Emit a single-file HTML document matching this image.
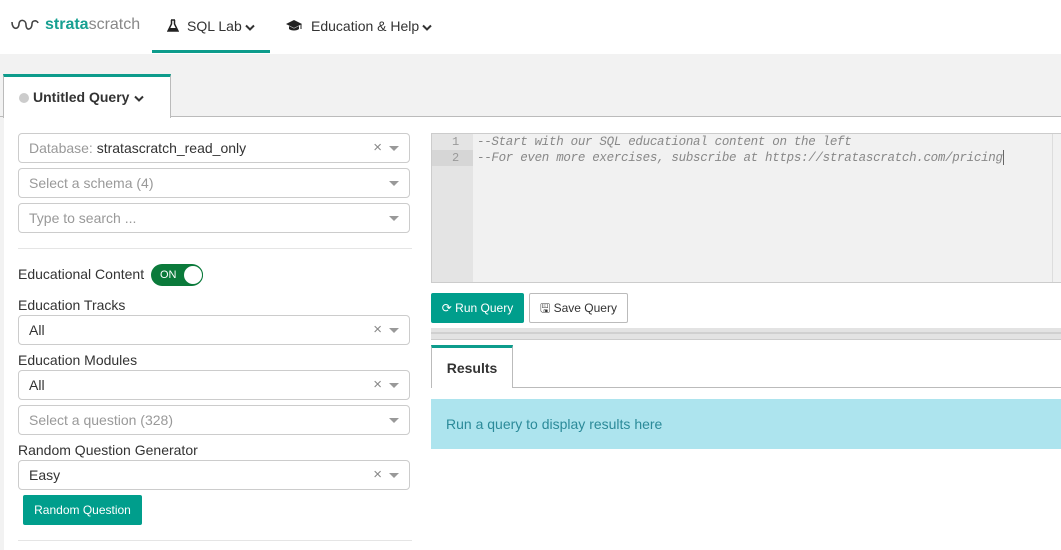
<!DOCTYPE html><html><head><style>
*{box-sizing:border-box;margin:0;padding:0}
body{width:1061px;height:550px;overflow:hidden;background:#fff;font-family:"Liberation Sans",sans-serif;position:relative;color:#333}
.a{position:absolute}
.sel{position:absolute;left:18px;width:392px;height:30px;border:1px solid #ccc;border-radius:4px;font-size:14px;line-height:28px;padding-left:10px;color:#333}
.ph{color:#999}
.sel .x{position:absolute;right:27px;top:0;color:#888;font-size:15px}
.sel .c{position:absolute;right:10px;top:12px;border-left:5px solid transparent;border-right:5px solid transparent;border-top:5px solid #999}
.lbl{position:absolute;left:18px;font-size:14px;color:#333}
.code{position:absolute;left:477px;font-family:"Liberation Mono",monospace;font-style:italic;font-size:12.5px;color:#888;letter-spacing:-0.3px}
.chev{display:inline-block;vertical-align:middle;margin-left:3px}
</style></head><body>
<svg class="a" style="left:10px;top:18px" width="30" height="14" viewBox="0 0 30 14"><path d="M2 4 C2 12,9 12,9 6 C9 1,16 1,16 7 C16 13,22 12,22 6 C22 2,27 2,28 5" fill="none" stroke="#444" stroke-width="1.6"/></svg>
<div class="a" style="left:45px;top:16px;font-size:16px;"><b style="color:#17a091">strata</b><span style="color:#888">scratch</span></div>
<svg class="a" style="left:167px;top:19px" width="12" height="13" viewBox="0 0 12 13"><path d="M4 1h4M4.5 1v4L1 12h10L7.5 5V1" fill="none" stroke="#222" stroke-width="1.5"/><path d="M2.5 9h7l1.5 3H1z" fill="#222"/></svg>
<div class="a" style="left:187px;top:18px;font-size:14px;color:#333">SQL Lab<svg class="chev" width="10" height="7" viewBox="0 0 10 7"><path d="M1 1.5l4 4 4-4" fill="none" stroke="#333" stroke-width="2"/></svg></div>
<div class="a" style="left:152px;top:50px;width:118px;height:3px;background:#0d9c8c"></div>
<svg class="a" style="left:285px;top:19px" width="18" height="13" viewBox="0 0 18 13"><path d="M9 1L1 5l8 4 8-4z" fill="#222"/><path d="M4 7v3c2 2 8 2 10 0V7L9 9.5z" fill="#222"/><path d="M16 5v5" stroke="#222" stroke-width="1"/></svg>
<div class="a" style="left:311px;top:18px;font-size:14px;color:#333">Education &amp; Help<svg class="chev" width="10" height="7" viewBox="0 0 10 7"><path d="M1 1.5l4 4 4-4" fill="none" stroke="#333" stroke-width="2"/></svg></div>
<div class="a" style="left:0;top:54px;width:1061px;height:63px;background:#f2f2f2"></div>
<div class="a" style="left:0;top:116px;width:1061px;height:1px;background:#bbb"></div>
<div class="a" style="left:0;top:117px;width:4px;height:433px;background:#f2f2f2"></div>
<div class="a" style="left:3px;top:74px;width:168px;height:44px;background:#fff;border:1px solid #bbb;border-bottom:none;border-top:3px solid #0d9c8c"></div>
<div class="a" style="left:19px;top:93px;width:10px;height:10px;border-radius:50%;background:#ccc"></div>
<div class="a" style="left:33px;top:89px;font-size:14px;font-weight:bold;color:#333">Untitled Query<svg class="chev" style="margin-left:5px" width="10" height="7" viewBox="0 0 10 7"><path d="M1 1.5l4 4 4-4" fill="none" stroke="#333" stroke-width="2"/></svg></div>

<div class="sel" style="top:133px"><span class="ph">Database: </span>stratascratch_read_only<span class="x">×</span><span class="c"></span></div>
<div class="sel ph" style="top:168px">Select a schema (4)<span class="c"></span></div>
<div class="sel ph" style="top:203px">Type to search ...<span class="c"></span></div>
<div class="a" style="left:18px;top:248px;width:394px;height:1px;background:#e5e5e5"></div>
<div class="lbl" style="top:266px">Educational Content</div>
<div class="a" style="left:151px;top:264px;width:52px;height:22px;border-radius:11px;background:#0b7a3b"></div>
<div class="a" style="left:160px;top:269px;font-size:11px;color:#fff">ON</div>
<div class="a" style="left:183px;top:265px;width:20px;height:20px;border-radius:50%;background:#fff;border:1px solid #0b7a3b"></div>
<div class="lbl" style="top:297px">Education Tracks</div>
<div class="sel" style="top:315px">All<span class="x">×</span><span class="c"></span></div>
<div class="lbl" style="top:352px">Education Modules</div>
<div class="sel" style="top:370px">All<span class="x">×</span><span class="c"></span></div>
<div class="sel ph" style="top:405px">Select a question (328)<span class="c"></span></div>
<div class="lbl" style="top:442px">Random Question Generator</div>
<div class="sel" style="top:460px">Easy<span class="x">×</span><span class="c"></span></div>
<div class="a" style="left:23px;top:495px;width:119px;height:30px;background:#009e8c;border-radius:2px;color:#fff;font-size:12px;line-height:30px;text-align:center">Random Question</div>
<div class="a" style="left:18px;top:540px;width:394px;height:1px;background:#e5e5e5"></div>

<div class="a" style="left:431px;top:133px;width:640px;height:150px;background:#f1f1f1;border:1px solid #ccc"></div>
<div class="a" style="left:432px;top:134px;width:41px;height:148px;background:#e4e4e4"></div>
<div class="a" style="left:432px;top:150px;width:41px;height:16px;background:#d6d6d6"></div>
<div class="a" style="left:1052px;top:134px;width:1px;height:148px;background:#ddd"></div>
<div class="a" style="left:452px;top:135px;font-size:12px;color:#999;font-family:'Liberation Mono',monospace">1</div>
<div class="a" style="left:452px;top:151px;font-size:12px;color:#999;font-family:'Liberation Mono',monospace">2</div>
<div class="code" style="top:135px">--Start with our SQL educational content on the left</div>
<div class="code" style="top:151px">--For even more exercises, subscribe at https://stratascratch.com/pricing</div>
<div class="a" style="left:1003px;top:150px;width:1px;height:15px;background:#666"></div>
<div class="a" style="left:431px;top:293px;width:93px;height:30px;background:#009e8c;border-radius:2px;color:#fff;font-size:12px;line-height:30px;text-align:center">⟳ Run Query</div>
<div class="a" style="left:529px;top:293px;width:99px;height:30px;border:1px solid #bbb;border-radius:2px;color:#333;font-size:12px;line-height:28px;text-align:center">🖫 Save Query</div>
<div class="a" style="left:431px;top:328px;width:630px;height:12px;background:#e3e3e3;border-bottom:1px solid #ccc"></div>
<div class="a" style="left:431px;top:332px;width:630px;height:2px;background:#d0d0d0"></div>
<div class="a" style="left:431px;top:387px;width:630px;height:1px;background:#bbb"></div>
<div class="a" style="left:431px;top:345px;width:82px;height:43px;background:#fff;border:1px solid #bbb;border-bottom:none;border-top:3px solid #0d9c8c;font-size:14px;font-weight:bold;text-align:center;line-height:40px;color:#333">Results</div>
<div class="a" style="left:431px;top:399px;width:630px;height:50px;background:#ade4ee;color:#2b8a99;font-size:14px;line-height:50px;padding-left:15px">Run a query to display results here</div>
</body></html>
